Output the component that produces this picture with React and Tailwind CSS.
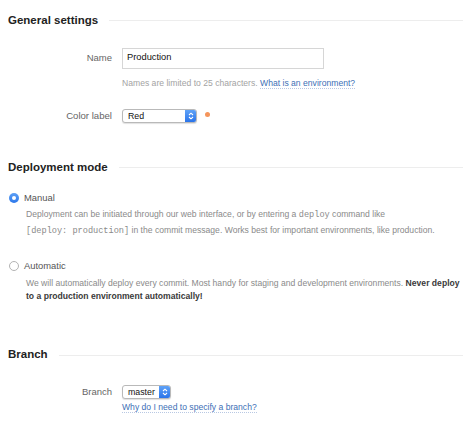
import React from 'react';

const font = { fontFamily: '"Liberation Sans", Arial, sans-serif' };

const SectionHeading = ({ title }) => (
  <div className="flex items-center gap-[11px]">
    <h2 className="text-[11.5px] font-bold text-[#222] leading-none whitespace-nowrap">{title}</h2>
    <div className="flex-1 border-t border-[#ededed]" />
  </div>
);

const MacSelect = ({ value, width }) => (
  <div
    className="flex items-stretch h-[14px] rounded-[3px] border border-[#b9b9b9] bg-white shadow-[0_1px_1px_rgba(0,0,0,0.12)] overflow-hidden"
    style={{ width }}
  >
    <span className="flex-1 pl-[5px] text-[8.8px] leading-[12px] text-[#111]">{value}</span>
    <span className="w-[11px] bg-gradient-to-b from-[#5fa2f7] to-[#2a74ea] flex items-center justify-center">
      <svg width="6" height="8" viewBox="0 0 6 8" fill="none" stroke="white" strokeWidth="1.1">
        <path d="M1 3 L3 1.2 L5 3" />
        <path d="M1 5 L3 6.8 L5 5" />
      </svg>
    </span>
  </div>
);

const Radio = ({ checked }) =>
  checked ? (
    <span className="w-[10px] h-[10px] rounded-full bg-gradient-to-b from-[#5da0f5] to-[#2b77ea] flex items-center justify-center shrink-0">
      <span className="w-[4px] h-[4px] rounded-full bg-white" />
    </span>
  ) : (
    <span className="w-[10px] h-[10px] rounded-full border border-[#b3b3b3] bg-white shrink-0" />
  );

const App = () => {
  return (
    <div className="w-[474px] h-[421px] bg-white pl-[8px] pr-[11px] pt-[15px]" style={font}>
      {/* General settings */}
      <SectionHeading title="General settings" />

      <div className="mt-[21px] flex items-center">
        <label className="w-[104px] text-right text-[9.5px] text-[#666]">Name</label>
        <div className="ml-[10px] w-[202px] h-[21px] border border-[#d6d6d6] flex items-center pl-[4px]">
          <span className="text-[9.3px] text-[#111]">Production</span>
        </div>
      </div>
      <p className="ml-[114px] mt-[8px] text-[8.6px] text-[#a3a3a3] leading-[12px]">
        Names are limited to 25 characters.{' '}
        <a className="text-[#3d6fb6] border-b border-dotted border-[#b8c8e3]">What is an environment?</a>
      </p>

      <div className="mt-[20px] flex items-center">
        <label className="w-[104px] text-right text-[9.6px] text-[#666]">Color label</label>
        <div className="ml-[10px]">
          <MacSelect value="Red" width={75} />
        </div>
        <span className="ml-[8px] mb-[2px] w-[5px] h-[5px] rounded-full bg-[#f5955b]" />
      </div>

      {/* Deployment mode */}
      <div className="mt-[39px]">
        <SectionHeading title="Deployment mode" />
      </div>

      <div className="mt-[19px] flex items-center gap-[5px] pl-[1px]">
        <Radio checked />
        <span className="text-[9.4px] leading-[11px] text-[#555]">Manual</span>
      </div>
      <p className="ml-[18px] mt-[4px] text-[8.6px] leading-[15px] text-[#8a8a8a]">
        Deployment can be initiated through our web interface, or by entering a{' '}
        <code className="font-['Liberation_Mono'] text-[8.6px]">deploy</code> command like
        <br />
        <code className="font-['Liberation_Mono'] text-[8.6px]">[deploy: production]</code> in the commit message. Works best for important environments, like production.
      </p>

      <div className="mt-[21px] flex items-center gap-[5px] pl-[1px]">
        <Radio />
        <span className="text-[9.4px] leading-[11px] text-[#555]">Automatic</span>
      </div>
      <p className="ml-[18px] mt-[6px] text-[8.6px] leading-[13px] text-[#8a8a8a]">
        We will automatically deploy every commit. Most handy for staging and development environments.{' '}
        <strong className="text-[#3a3a3a]">Never deploy</strong>
        <br />
        <strong className="text-[#3a3a3a]">to a production environment automatically!</strong>
      </p>

      {/* Branch */}
      <div className="mt-[46px]">
        <SectionHeading title="Branch" />
      </div>

      <div className="mt-[24px] flex items-center">
        <label className="w-[104px] text-right text-[9.5px] text-[#666]">Branch</label>
        <div className="ml-[10px]">
          <MacSelect value="master" width={49} />
        </div>
      </div>
      <p className="ml-[114px] mt-[2px] text-[8.6px] leading-[12px]">
        <a className="text-[#3d6fb6] border-b border-dotted border-[#b8c8e3]">Why do I need to specify a branch?</a>
      </p>
    </div>
  );
};

export default App;
